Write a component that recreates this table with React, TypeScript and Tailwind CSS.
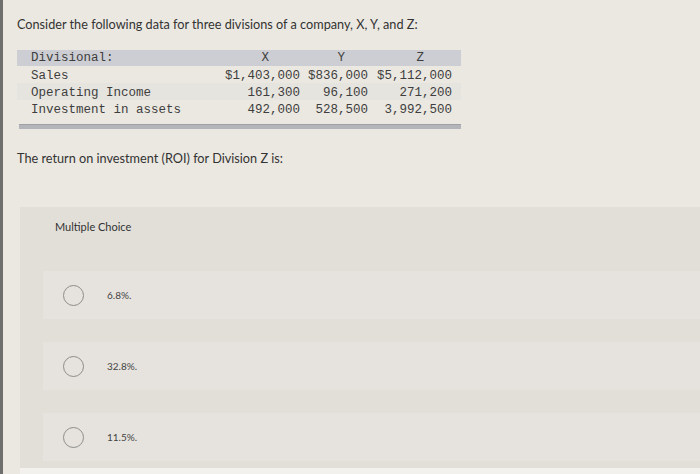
import React from "react";

const rows = [
  { label: "Sales", x: "$1,403,000", y: "$836,000", z: "$5,112,000", bg: "bg-transparent" },
  { label: "Operating Income", x: "161,300", y: "96,100", z: "271,200", bg: "bg-[#e6e4df]" },
  { label: "Investment in assets", x: "492,000", y: "528,500", z: "3,992,500", bg: "bg-transparent" },
];

const options = ["6.8%.", "32.8%.", "11.5%."];

export default function App() {
  return (
    <div
      className="w-[700px] h-[474px] overflow-hidden bg-[#ebe8e1] border-l-[3px] border-[#6e6e6c] flex flex-col text-[#333]"
      style={{ fontFamily: "Lato, 'Open Sans', sans-serif" }}
    >
      <p className="mt-[16px] ml-[14px] text-[12.7px] leading-[16px]">
        Consider the following data for three divisions of a company, X, Y, and Z:
      </p>

      <div
        className="mt-[18px] ml-[14px] w-[444px] text-[#3e3e3e] text-[12.5px]"
        style={{ fontFamily: "'Liberation Mono', monospace" }}
      >
        <div className="flex h-[16px] items-center bg-[#cdced3]">
          <div className="w-[208px] pl-[14px]">Divisional:</div>
          <div className="w-[75px] text-right pr-[31px]">X</div>
          <div className="w-[68px] text-right pr-[23px]">Y</div>
          <div className="w-[84px] text-right pr-[28px]">Z</div>
        </div>
        {rows.map((r) => (
          <div key={r.label} className={`flex h-[17px] items-center pt-[3px] ${r.bg}`}>
            <div className="w-[208px] pl-[14px]">{r.label}</div>
            <div className="w-[75px] text-right">{r.x}</div>
            <div className="w-[68px] text-right">{r.y}</div>
            <div className="w-[84px] text-right">{r.z}</div>
          </div>
        ))}
        <div className="mt-[7px] ml-[2px] h-[5px] bg-[#b3b5ba] border-t border-[#9fa1a6]" />
      </div>

      <p className="mt-[21px] ml-[14px] text-[12.7px] leading-[16px]">
        The return on investment (ROI) for Division Z is:
      </p>

      <div className="mt-[41px] ml-[17px] flex-1 bg-[#e2dfd9] flex flex-col">
        <div className="pl-[35px] pt-[13px] text-[11px] leading-[14px] text-[#333]">Multiple Choice</div>
        <div className="ml-[23px] mt-[37px] flex flex-col gap-[23px]">
          {options.map((o) => (
            <div key={o} className="h-[48px] flex items-center bg-[#e6e3de]">
              <div className="ml-[20px] w-[21px] h-[21px] rounded-full border-[1.5px] border-[#8c8c8a]" />
              <span className="ml-[23px] text-[10px] text-[#444]">{o}</span>
            </div>
          ))}
        </div>
        <div className="flex-1" />
        <div className="h-[6px] bg-[#f2f1ed]" />
      </div>
    </div>
  );
}
